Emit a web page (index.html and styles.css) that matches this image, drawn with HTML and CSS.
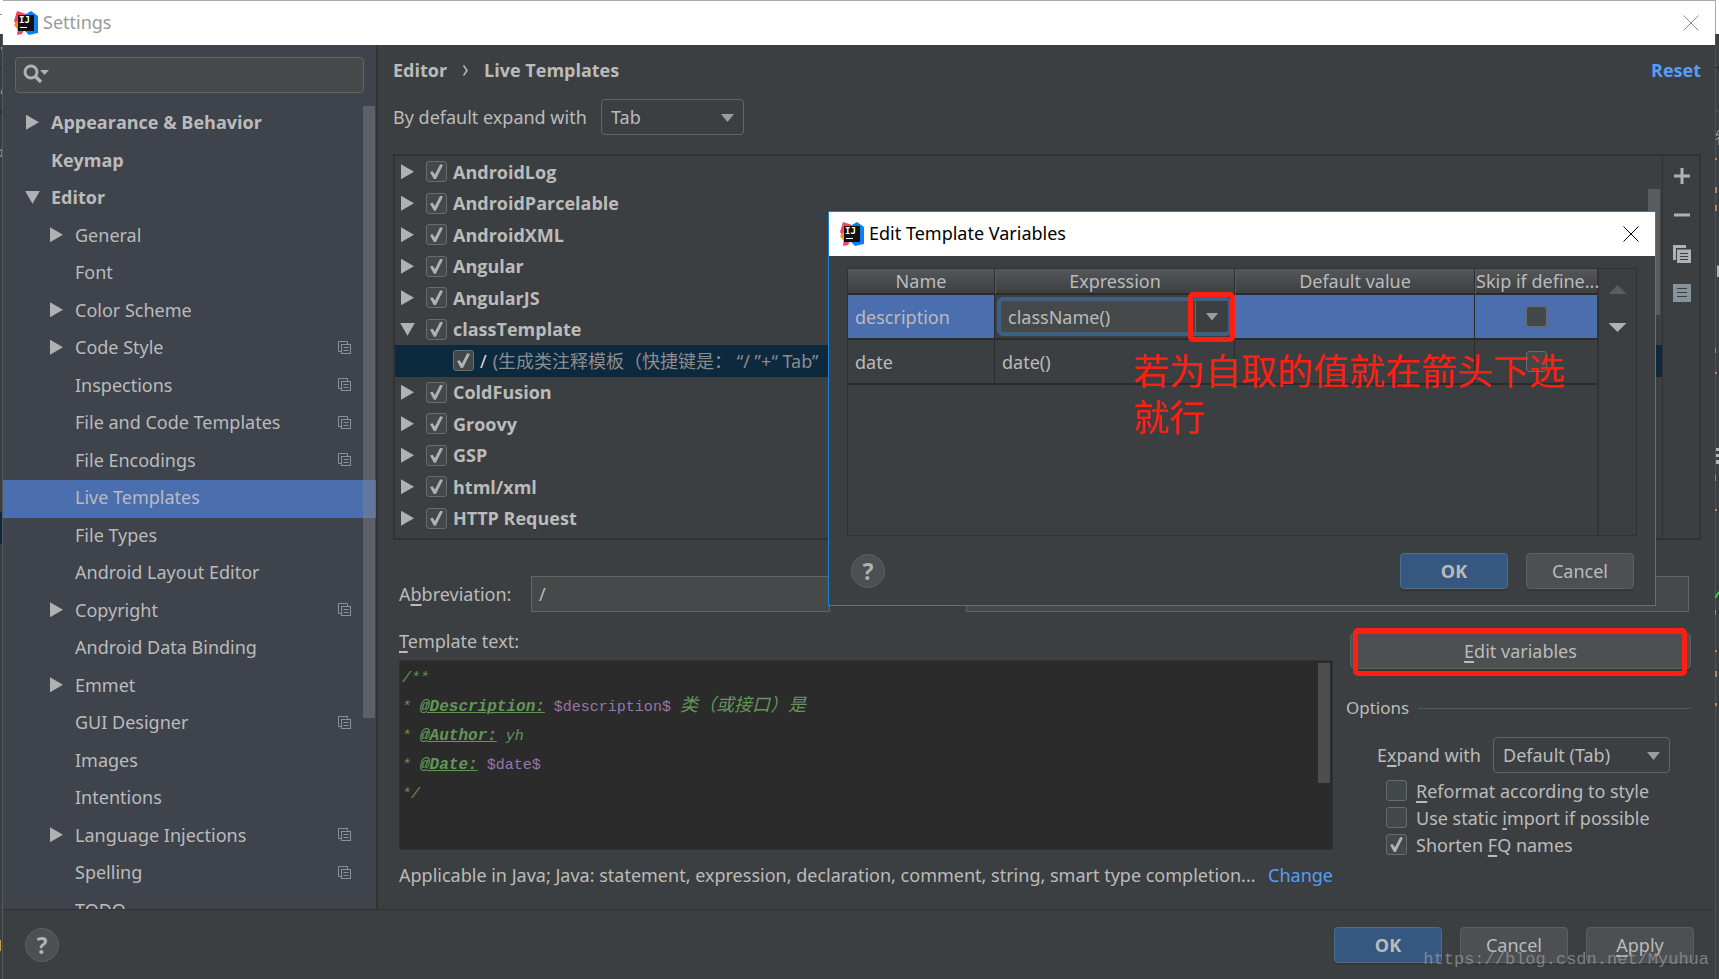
FILE: index.html
```html
<!DOCTYPE html>
<html lang="en">
<head>
<meta charset="utf-8">
<title>Settings</title>
<link rel="stylesheet" href="styles.css">
</head>
<body>
<svg class="defs" width="0" height="0" aria-hidden="true">
  <symbol id="logo" viewBox="0 0 24 24">
    <path d="M3 0l9 3 2 7-6 13-5 1 1-8-4-6z" fill="#fc3f63"/>
    <path d="M0 14l4-5 3 6-3 4z" fill="#fc8a1d"/>
    <path d="M12 3l5-3 7 5v17l-9 2-5-5z" fill="#0c7ff2"/>
    <rect x="4" y="4" width="16" height="16" fill="#111"/>
    <path d="M6 16.500h7" stroke="#fff" stroke-width="1"/>
    <text x="5" y="12" class="logo-text">IJ</text>
  </symbol>
  <symbol id="copy" viewBox="0 0 13 13">
    <path d="M3 10.500H.5V.500h9V3" fill="none" stroke="#87939a"/>
    <rect x="3.500" y="3.500" width="9" height="9" fill="none" stroke="#87939a"/>
    <path d="M5.500 6.500h5M5.500 9.500h5" stroke="#87939a"/>
  </symbol>
  <symbol id="close" viewBox="0 0 16 16"><path d="M.5.500l15 15M15.500.500l-15 15" fill="none" stroke="currentColor"/></symbol>
</svg>

<div class="desktop">
  <svg class="edge" width="3" height="979" aria-hidden="true">
    <rect width="3" height="34" fill="#fff"/><rect y="14" width="2" height="1" fill="#999"/>
    <path d="M1 47l2 5M1 94l2-8" stroke="#9aa4ae"/>
    <rect y="67" width="3" height="1" fill="#2b2b2b"/><rect y="111" width="3" height="2" fill="#2b2b2b"/>
    <path d="M0 150h2v6H0" fill="none" stroke="#aaa"/>
    <rect y="512" width="3" height="32" fill="#0d293e"/>
    <rect y="940" width="1" height="11" fill="#c9a04a"/><rect x="2" y="34" width="1" height="945" fill="#55585a"/>
  </svg>
  <div class="window">
    <header class="titlebar">
      <svg class="logo"><use href="#logo"/></svg>
      <h1>Settings</h1>
      <button class="close" aria-label="Close"><svg><use href="#close"/></svg></button>
    </header>
    <div class="body">
      <nav class="sidebar">
        <div class="search">
          <svg viewBox="0 0 28 20" aria-hidden="true"><circle cx="8" cy="8" r="6" fill="none" stroke="#afb1b3" stroke-width="3"/><path d="M12 12l6 6" stroke="#afb1b3" stroke-width="3.500"/><path d="M17 6h9l-4.500 5z" fill="#afb1b3"/></svg>
          <input type="text" aria-label="Search settings">
        </div>
        <div class="tree-wrap">
          <ul class="tree">
            <li class="top closed">Appearance &amp; Behavior</li>
            <li class="top">Keymap</li>
            <li class="top open">Editor</li>
            <li class="closed">General</li>
            <li>Font</li>
            <li class="closed">Color Scheme</li>
            <li class="closed">Code Style<svg><use href="#copy"/></svg></li>
            <li>Inspections<svg><use href="#copy"/></svg></li>
            <li>File and Code Templates<svg><use href="#copy"/></svg></li>
            <li>File Encodings<svg><use href="#copy"/></svg></li>
            <li class="selected">Live Templates</li>
            <li>File Types</li>
            <li>Android Layout Editor</li>
            <li class="closed">Copyright<svg><use href="#copy"/></svg></li>
            <li>Android Data Binding</li>
            <li class="closed">Emmet</li>
            <li>GUI Designer<svg><use href="#copy"/></svg></li>
            <li>Images</li>
            <li>Intentions</li>
            <li class="closed">Language Injections<svg><use href="#copy"/></svg></li>
            <li>Spelling<svg><use href="#copy"/></svg></li>
            <li>TODO</li>
          </ul>
          <div class="thumb side-thumb"></div>
        </div>
      </nav>

      <main class="content">
        <div class="crumbs">
          <span>Editor</span>
          <svg width="5" height="11" viewBox="0 0 5 11" aria-hidden="true"><path d="M.5.500l3.500 5-3.500 5" fill="none" stroke="#bbb" stroke-width="1.500"/></svg>
          <span>Live Templates</span>
          <a class="reset" href="#reset">Reset</a>
        </div>
        <div class="expand-row">
          <label for="expand">By default expand with</label>
          <span class="combo expand-combo"><select id="expand"><option>Tab</option></select></span>
        </div>

        <div class="templates">
          <ul class="groups">
            <li class="closed"><label><input type="checkbox" checked>AndroidLog</label></li>
            <li class="closed"><label><input type="checkbox" checked>AndroidParcelable</label></li>
            <li class="closed"><label><input type="checkbox" checked>AndroidXML</label></li>
            <li class="closed"><label><input type="checkbox" checked>Angular</label></li>
            <li class="closed"><label><input type="checkbox" checked>AngularJS</label></li>
            <li class="open"><label><input type="checkbox" checked>classTemplate</label></li>
            <li class="item"><label><input type="checkbox" checked><span class="abbr">/</span><span>(生成类注释模板（快捷键是： “/ ”+“ Tab”</span></label></li>
            <li class="closed"><label><input type="checkbox" checked>ColdFusion</label></li>
            <li class="closed"><label><input type="checkbox" checked>Groovy</label></li>
            <li class="closed"><label><input type="checkbox" checked>GSP</label></li>
            <li class="closed"><label><input type="checkbox" checked>html/xml</label></li>
            <li class="closed"><label><input type="checkbox" checked>HTTP Request</label></li>
          </ul>
          <div class="thumb list-thumb"></div>
          <div class="tools">
            <button aria-label="Add"><svg viewBox="0 0 18 18"><path d="M9 1v16M1 9h16" stroke="#afb1b3" stroke-width="3"/></svg></button>
            <button aria-label="Remove"><svg viewBox="0 0 18 18"><path d="M1 9h16" stroke="#afb1b3" stroke-width="3"/></svg></button>
            <button aria-label="Duplicate"><svg viewBox="0 0 18 18"><path d="M0 0h13v3H3v12H0z" fill="#afb1b3"/><path d="M4 4.500h14V19H4z" fill="#afb1b3"/><path d="M7 8.500h8M7 11.500h8M7 14.500h8" stroke="#3c3f41"/></svg></button>
            <button aria-label="Template group"><svg viewBox="0 0 18 18"><path d="M0 0h18v18H0z" fill="#87939a"/><path d="M4 4.500h10M4 8.500h10M4 12.500h10" stroke="#3c3f41"/></svg></button>
          </div>
        </div>

        <div class="form">
          <div class="abbr-row">
            <label for="abbr">A<u>b</u>breviation:</label>
            <input id="abbr" class="field" type="text" value="/">
            <input class="field desc" type="text" aria-label="Description">
          </div>
          <div class="lower">
            <section>
              <h2 class="label"><u>T</u>emplate text:</h2>
              <div class="editor">
                <pre class="code" contenteditable="true" spellcheck="false"><i>/**</i>
<i>* <b>@Description:</b></i> <em>$description$</em> <i class="cjk">类（或接口）是</i>
<i>* <b>@Author:</b> yh</i>
<i>* <b>@Date:</b></i> <em>$date$</em>
<i>*/</i></pre>
                <div class="thumb code-thumb"></div>
              </div>
              <p class="applies"><span>Applicable in Java; Java: statement, expression, declaration, comment, string, smart type completion...</span><a href="#change">Change</a></p>
            </section>
            <section class="side">
              <div class="edit-wrap"><button class="btn edit-btn"><span><u>E</u>dit variables</span></button><span class="mark mark-edit"></span></div>
              <h2 class="options">Options</h2>
              <div class="expand-with">
                <label for="expand2">E<u>x</u>pand with</label>
                <span class="combo default-combo"><select id="expand2"><option>Default (Tab)</option></select></span>
              </div>
              <div class="checks">
                <label><input type="checkbox"><span><u>R</u>eformat according to style</span></label>
                <label><input type="checkbox"><span>Use static <u>i</u>mport if possible</span></label>
                <label><input type="checkbox" checked><span>Shorten <u>F</u>Q names</span></label>
              </div>
            </section>
          </div>
        </div>
      </main>
    </div>
    <footer class="footer">
      <button class="help" aria-label="Help">?</button>
      <button class="btn primary">OK</button>
      <button class="btn">Cancel</button>
      <button class="btn"><span><u>A</u>pply</span></button>
    </footer>
  </div>
  <svg class="edge" width="4" height="979" aria-hidden="true">
    <rect width="4" height="34" fill="#fff"/><rect width="1" height="34" fill="#aaa"/>
    <rect y="34" width="1" height="945" fill="#505355"/>
    <rect y="67" width="4" height="1" fill="#2b2b2b"/><rect y="110" width="4" height="2" fill="#4a4d4f"/>
    <path d="M4 130l-3 5h3M1 140l3-3v8" fill="none" stroke="#aaa"/>
    <path d="M0 158h2v2H0zM0 187h2v6H0zM0 205h2v6H0z" fill="#b08060"/>
    <path d="M2 266l2-1v12H2zM1 448h3v3H1zM1 454h3v3H1zM1 460h3v4H1z" fill="#b5b5b5"/>
    <path d="M0 348h1v5H0zM0 372h2v2H0zM0 475h1v6H0zM0 509h2v2H0zM0 610h1v5H0zM0 650h2v2H0zM0 671h2v6H0zM0 703h2v3H0z" fill="#b08060"/>
    <path d="M0 598l4-6" stroke="#1fe01f" stroke-width="2"/>
  </svg>
</div>

<div class="dialog" role="dialog" aria-labelledby="dlg-title">
  <header class="titlebar dlg-bar">
    <svg class="logo"><use href="#logo"/></svg>
    <h1 id="dlg-title">Edit Template Variables</h1>
    <button class="close" aria-label="Close dialog"><svg><use href="#close"/></svg></button>
  </header>
  <div class="vars">
    <div class="vars-main">
      <table>
        <colgroup><col class="c-name"><col class="c-expr"><col class="c-def"><col class="c-skip"></colgroup>
        <thead><tr><th>Name</th><th>Expression</th><th>Default value</th><th>Skip if define...</th></tr></thead>
        <tbody>
          <tr class="current"><td>description</td>
            <td class="editing"><div class="cell-combo"><input type="text" value="className()" aria-label="Expression"><button aria-label="Show expressions"></button><span class="mark mark-arrow"></span></div></td>
            <td></td><td class="mid"><input type="checkbox" aria-label="Skip description"></td></tr>
          <tr><td>date</td><td>date()</td><td></td><td class="mid"><input type="checkbox" aria-label="Skip date"></td></tr>
        </tbody>
      </table>
    </div>
    <div class="vars-tools">
      <button class="up" aria-label="Move up"></button>
      <button class="down" aria-label="Move down"></button>
    </div>
  </div>
  <div class="dlg-footer">
    <button class="help" aria-label="Help">?</button>
    <button class="btn primary">OK</button>
    <button class="btn">Cancel</button>
  </div>
  <p class="note">若为自取的值就在箭头下选就行</p>
</div>
<div class="watermark">https://blog.csdn.net/Myuhua</div>
</body>
</html>
```
FILE: styles.css
```css
* { box-sizing: border-box; }
body, h1, h2, p, ul, pre { margin: 0; padding: 0; }
body {
  background: #3c3f41;
  color: #bbb;
  font: 18px/24px "Noto Sans", "Noto Sans CJK SC", sans-serif;
  position: relative;
}
ul { list-style: none; }
button, input, select { font: inherit; color: inherit; }
button { border: 0; background: none; padding: 0; }
a { color: #589df6; text-decoration: none; }
u { text-underline-offset: 3px; text-decoration-thickness: 2px; }
.defs { position: absolute; }
.desktop { display: flex; min-height: 100vh; }
.edge { flex: none; }
.window { flex: 1; min-width: 0; display: flex; flex-direction: column; border-top: 1px solid #aaa; }

.titlebar { display: flex; align-items: center; gap: 5px; height: 44px; padding: 0 16px 0 11px; background: #fff; color: #999; }
.titlebar h1 { font-size: 18px; font-weight: 400; flex: 1; padding-bottom: 2px; }
.logo { width: 24px; height: 24px; }
.logo-text { font: bold 9px "DejaVu Sans Mono", monospace; fill: #fff; }
.close { width: 16px; height: 16px; color: #888; }
.close svg { display: block; width: 16px; height: 16px; }

.body { flex: 1; display: flex; min-height: 0; }
.sidebar { width: 375px; flex: none; background: #3f434c; border-right: 2px solid #323232; display: flex; flex-direction: column; padding-top: 12px; }
.search { display: flex; align-items: center; margin: 0 12px; height: 36px; border: 1px solid #646464; border-radius: 4px; background: #45494a; padding: 0 0 2px 7px; }
.search svg { width: 28px; height: 20px; flex: none; }
.search input { flex: 1; min-width: 0; border: 0; background: none; outline: 0; }
.tree-wrap { position: relative; flex: 1 1 0px; min-height: 0; overflow: hidden; margin-top: 12px; }
.tree { display: grid; grid-auto-rows: 1fr; height: 825px; }
.tree li { display: flex; align-items: center; position: relative; padding: 0 25px 3px 72px; }
.tree .top { padding-left: 48px; font-family: "Open Sans", sans-serif; font-weight: 700; }
.tree svg { width: 13px; height: 13px; margin-left: auto; }
.tree .selected { background: #4b6eaf; }
.thumb { position: absolute; background: #5b5e66; }
.side-thumb { top: 1px; right: 1px; width: 12px; height: 612px; background: rgba(130, 132, 138, .45); }

.closed::before, .open::before { content: ""; position: absolute; background: #afb1b3; }
.closed::before { width: 13px; height: 15px; clip-path: polygon(0 0, 100% 50%, 0 100%); }
.open::before { width: 15px; height: 13px; clip-path: polygon(0 0, 100% 0, 50% 100%); }
.tree .closed::before { left: 47px; }
.tree .top::before { left: 23px; }
.tree .open::before { left: 22px; }

.content { flex: 1; min-width: 0; padding: 0 14px 0 15px; }
.crumbs { display: flex; align-items: center; height: 50px; font-family: "Open Sans", sans-serif; font-weight: 700; gap: 16px; }
.reset { margin-left: auto; }
.expand-row { display: flex; align-items: center; margin-top: 4px; }
.expand-row label { width: 208px; }

.combo { position: relative; display: block; }
.combo select { appearance: none; width: 100%; height: 36px; border: 1px solid #646464; border-radius: 4px; background: #3c3f41; padding: 0 9px; display: block; outline: 0; }
.combo::after { content: ""; position: absolute; right: 10px; top: 15px; width: 13px; height: 8px; background: #9a9c9e; clip-path: polygon(0 0, 100% 0, 50% 100%); pointer-events: none; }
.expand-combo { width: 143px; }
.default-combo { width: 177px; }

input[type="checkbox"] { appearance: none; margin: 0; width: 21px; height: 21px; flex: none; border: 1px solid #6b6b6b; border-radius: 3px; background: #43494a; display: grid; place-items: center; }
input[type="checkbox"]:checked::before { content: ""; width: 13px; height: 15px; background: #afb1b3; clip-path: polygon(0 52%, 20% 47%, 38% 68%, 78% 0, 100% 5%, 45% 100%, 30% 100%); }

.templates { position: relative; display: flex; margin-top: 19px; border: 2px solid #323232; }
.groups { flex: 1; min-width: 0; display: grid; grid-auto-rows: 1fr; height: 378px; margin-bottom: 4px; font-family: "Open Sans", sans-serif; font-weight: 700; }
.groups li { position: relative; display: flex; align-items: center; padding-left: 31px; overflow: hidden; }
.groups .closed::before { left: 6px; }
.groups .open::before { left: 5px; }
.groups label { display: flex; align-items: center; gap: 6px; white-space: nowrap; }
.groups .item { padding-left: 58px; font-family: "Noto Sans", "Noto Sans CJK SC", sans-serif; font-weight: 400; background: #0d293e; color: #8c8c8c; }
.item .abbr { color: #ddd; }
.tools { width: 37px; border-left: 1px solid #323232; display: flex; flex-direction: column; align-items: center; gap: 21px; padding: 11px 0 0 1px; }
.tools button, .tools svg { display: block; width: 18px; height: 18px; }
.list-thumb { right: 39px; top: 33px; width: 12px; height: 126px; background: #5a5c5e; }

.form { padding: 0 10px 0 6px; margin-top: 36px; }
.abbr-row { display: flex; align-items: center; }
.abbr-row label { width: 132px; }
.field { height: 36px; border: 1px solid #646464; background: #45494a; padding: 0 7px; width: 299px; outline: 0; }
.desc { flex: 1; width: auto; min-width: 0; margin: 0 2px 0 136px; }
.lower { display: grid; grid-template-columns: minmax(0, 1fr) 345px; gap: 13px; }
.label { font-size: 18px; font-weight: 400; margin: 17px 0 7px; }
.editor { position: relative; height: 190px; background: #2b2b2b; border: 1px solid #323232; }
.code { padding: 3px 2px; font: 15px/29px "Liberation Mono", "Noto Sans CJK SC", monospace; color: #629755; outline: 0; }
.code b { font-size: 16px; text-decoration: underline; text-decoration-thickness: 1px; }
.code em { font-style: normal; color: #9876aa; }
.code .cjk { font-size: 18px; line-height: 20px; }
.code-thumb { right: 2px; top: 2px; width: 12px; height: 120px; background: #4d4d4d; }
.applies { display: flex; justify-content: space-between; white-space: nowrap; margin-top: 13px; }

.btn { width: 108px; height: 36px; border: 1px solid #5e6060; border-radius: 4px; background: #4c5052; box-shadow: 0 2px 1px #353739; }
.primary { background: #365880; border-color: #4c708c; font-family: "Open Sans", sans-serif; font-weight: 700; }
.edit-wrap { position: relative; margin: 21px 0 0 4px; }
.edit-btn { width: 100%; display: block; }
.mark { position: absolute; border: 5px solid #ff1f12; border-radius: 5px; pointer-events: none; }
.mark-edit { inset: -5px 4px -7px 3px; }
.options { display: flex; align-items: center; gap: 9px; margin-top: 27px; font-size: 17px; font-weight: 400; }
.options::after { content: ""; flex: 1; height: 1px; background: #555859; }
.expand-with { display: flex; align-items: center; justify-content: flex-end; gap: 12px; margin: 17px 21px 4px 0; }
.checks { padding-left: 40px; }
.checks label { display: flex; align-items: center; gap: 9px; height: 27px; white-space: nowrap; }

.footer { display: flex; align-items: center; height: 70px; border-top: 1px solid #323232; padding: 0 21px 0 22px; gap: 18px; }
.help { width: 34px; height: 34px; margin-right: auto; border: 1px solid #5e6060; border-radius: 50%; background: #4c5052; font-size: 23px; font-weight: 700; line-height: 30px; color: #afb1b3; }

.dialog { position: absolute; left: 828px; top: 211px; width: 828px; border: 1px solid #1883d7; background: #3c3f41; }
.dlg-bar { color: #000; }
.dlg-bar .close { color: #000; }
.vars { display: flex; margin: 12px 18px 0; height: 268px; border: 1px solid #323232; }
.vars-main { flex: 1; min-width: 0; border-right: 2px solid #323232; }
.vars table { width: 100%; table-layout: fixed; border-collapse: separate; border-spacing: 0; }
.c-name { width: 147px; }
.c-expr, .c-def { width: 240px; }
th { height: 26px; padding: 0; font-weight: 400; line-height: 24px; white-space: nowrap; background: linear-gradient(#54585a, #3d3f41); border-bottom: 2px solid #2b2b2b; border-right: 1px solid #2b2b2b; }
th + th { border-left: 1px solid #5b5e60; }
th:last-child, td:last-child { border-right: 0; }
td { height: 45px; padding: 0 7px; border-right: 1px solid #2b2b2b; border-bottom: 2px solid #2b2b2b; }
.current td { background: #4b6eaf; }
.current .editing { background: #3c3f41; padding: 0 2px; }
.mid input[type="checkbox"] { margin: 0 auto; }
.cell-combo { position: relative; display: flex; height: 39px; border: 4px solid #3d6185; border-radius: 6px; background: #45494a; }
.cell-combo input { flex: 1; min-width: 0; border: 0; background: none; outline: 0; padding: 0 7px; }
.cell-combo button { width: 33px; border-left: 1px solid #646464; background: #3c3f41; display: grid; place-items: center; }
.cell-combo button::before { content: ""; width: 13px; height: 8px; background: #9a9c9e; clip-path: polygon(0 0, 100% 0, 50% 100%); }
.mark-arrow { top: -9px; right: -7px; width: 47px; height: 50px; }
.vars-tools { width: 37px; display: flex; flex-direction: column; align-items: center; gap: 29px; padding-top: 16px; }
.vars-tools button { width: 18px; height: 9px; }
.up { background: #5a5c5e; clip-path: polygon(50% 0, 100% 100%, 0 100%); }
.down { background: #afb1b3; clip-path: polygon(0 0, 100% 0, 50% 100%); }
.dlg-footer { display: flex; align-items: center; gap: 18px; padding: 17px 21px 16px 22px; }
.note { position: absolute; left: 304px; top: 134px; width: 440px; color: #ff1f12; font: 36px/46px "Noto Sans CJK SC", sans-serif; }
.watermark { position: absolute; right: 10px; bottom: 7px; font: 17px/24px "Liberation Mono", monospace; color: #8f9192; opacity: .8; }
```
